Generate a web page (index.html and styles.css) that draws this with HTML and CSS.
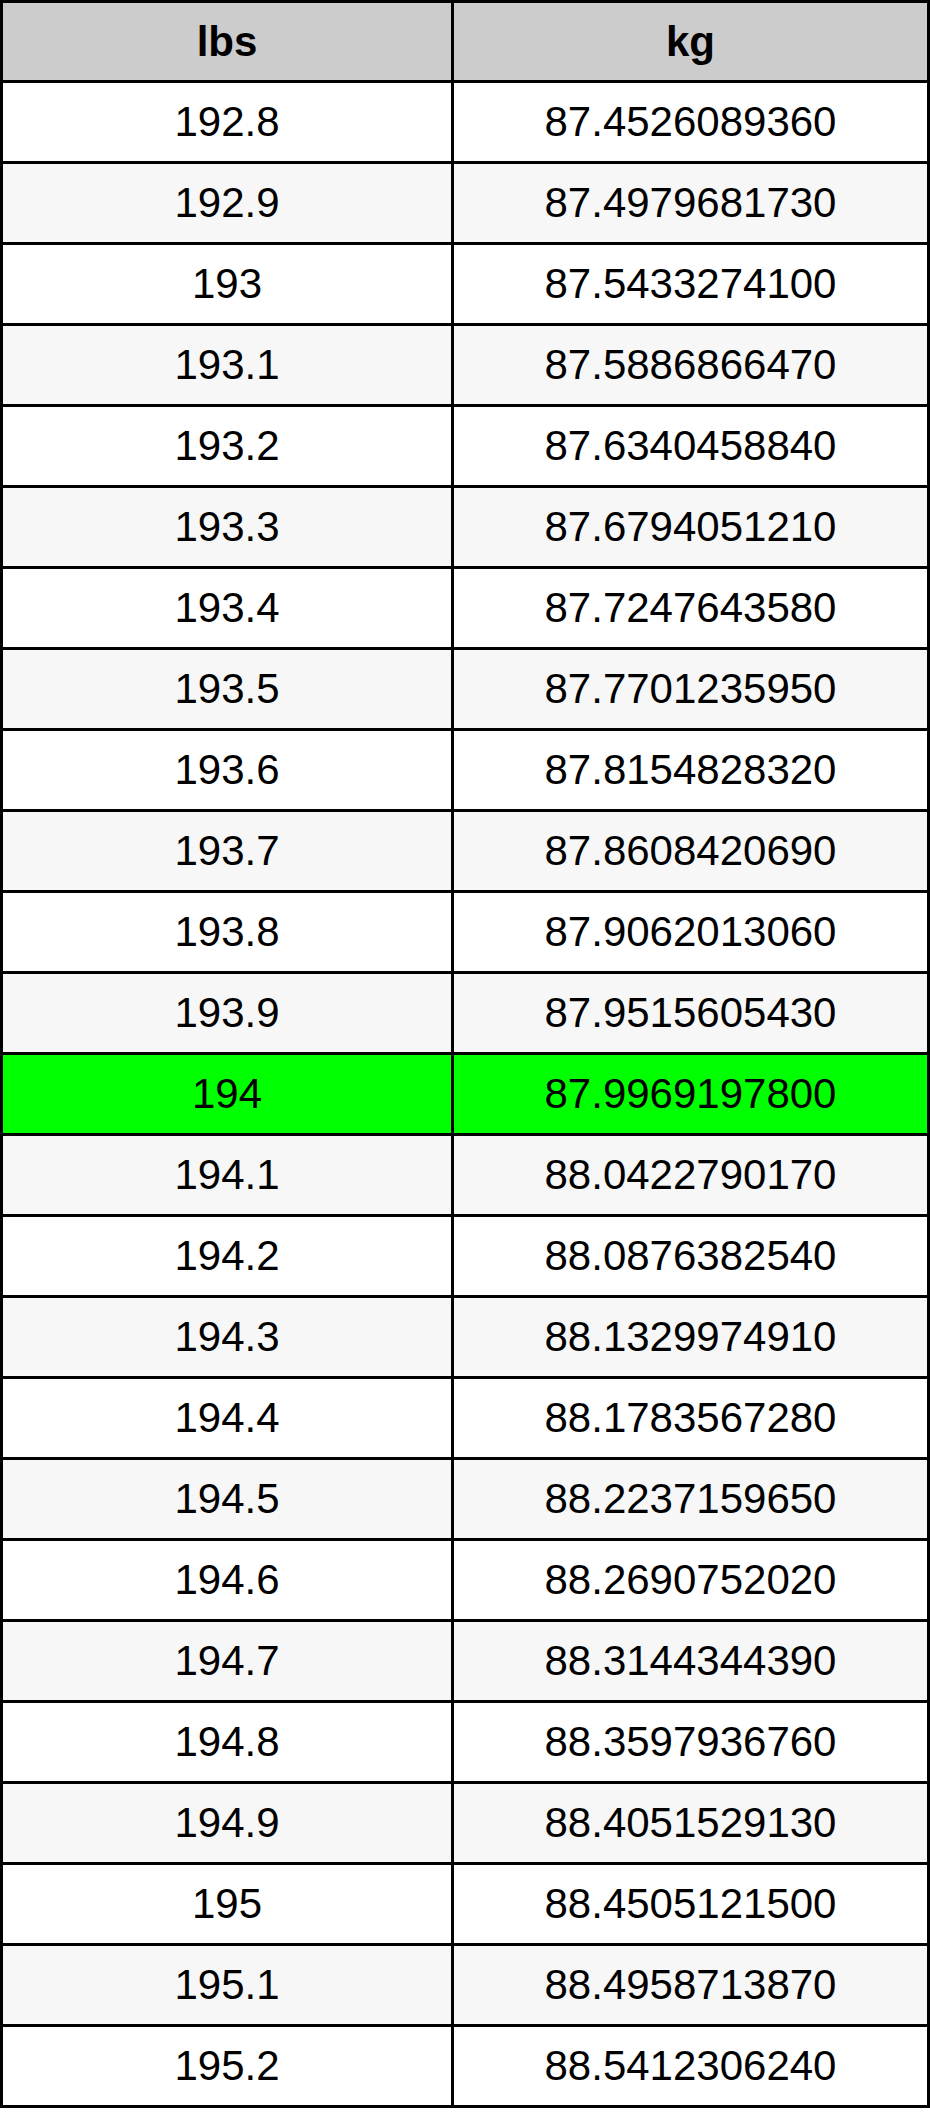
FILE: index.html
```html
<!DOCTYPE html>
<html>
<head>
<meta charset="utf-8">
<title>lbs to kg</title>
<link rel="stylesheet" href="styles.css">
</head>
<body>
<table class="conv">
<thead>
<tr><th class="c1">lbs</th><th class="c2">kg</th></tr>
</thead>
<tbody>
<tr><td>192.8</td><td>87.4526089360</td></tr>
<tr class="alt"><td>192.9</td><td>87.4979681730</td></tr>
<tr><td>193</td><td>87.5433274100</td></tr>
<tr class="alt"><td>193.1</td><td>87.5886866470</td></tr>
<tr><td>193.2</td><td>87.6340458840</td></tr>
<tr class="alt"><td>193.3</td><td>87.6794051210</td></tr>
<tr><td>193.4</td><td>87.7247643580</td></tr>
<tr class="alt"><td>193.5</td><td>87.7701235950</td></tr>
<tr><td>193.6</td><td>87.8154828320</td></tr>
<tr class="alt"><td>193.7</td><td>87.8608420690</td></tr>
<tr><td>193.8</td><td>87.9062013060</td></tr>
<tr class="alt"><td>193.9</td><td>87.9515605430</td></tr>
<tr class="hl"><td>194</td><td>87.9969197800</td></tr>
<tr class="alt"><td>194.1</td><td>88.0422790170</td></tr>
<tr><td>194.2</td><td>88.0876382540</td></tr>
<tr class="alt"><td>194.3</td><td>88.1329974910</td></tr>
<tr><td>194.4</td><td>88.1783567280</td></tr>
<tr class="alt"><td>194.5</td><td>88.2237159650</td></tr>
<tr><td>194.6</td><td>88.2690752020</td></tr>
<tr class="alt"><td>194.7</td><td>88.3144344390</td></tr>
<tr><td>194.8</td><td>88.3597936760</td></tr>
<tr class="alt"><td>194.9</td><td>88.4051529130</td></tr>
<tr><td>195</td><td>88.4505121500</td></tr>
<tr class="alt"><td>195.1</td><td>88.4958713870</td></tr>
<tr><td>195.2</td><td>88.5412306240</td></tr>
</tbody>
</table>
</body>
</html>
```
FILE: styles.css
```css
html, body {
  margin: 0;
  padding: 0;
  background: #ffffff;
}

.conv {
  width: 930px;
  table-layout: fixed;
  border-collapse: separate;
  border-spacing: 0;
  border-top: 3px solid #000;
  border-left: 3px solid #000;
  font-family: "Liberation Sans", Arial, sans-serif;
  font-size: 42px;
  color: #000;
}

.conv th,
.conv td {
  padding: 0;
  text-align: center;
  border-right: 3px solid #000;
  border-bottom: 3px solid #000;
  line-height: 78px;
  white-space: nowrap;
}

.conv th {
  background: #cccccc;
  font-weight: bold;
  line-height: 77px;
}

.conv .c1 { width: 448px; }
.conv .c2 { width: 473px; }

.conv td { background: #ffffff; }
.conv tr.alt td { background: #f7f7f7; }
.conv tr.hl td { background: #00ff00; }
```
